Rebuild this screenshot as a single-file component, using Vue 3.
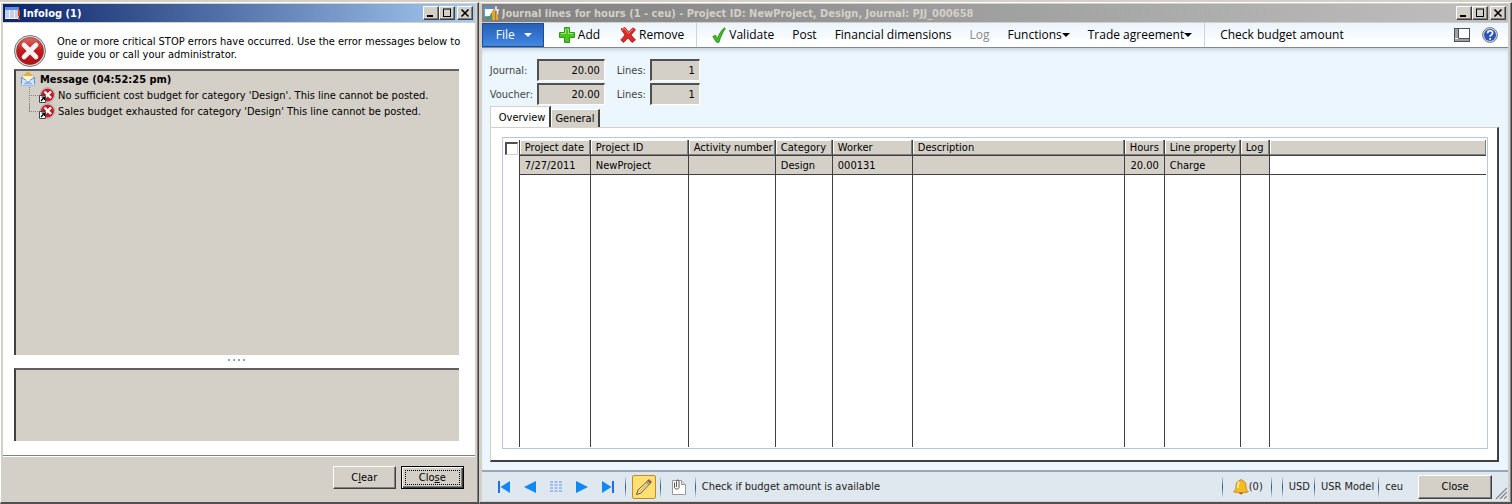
<template>
  <main class="desktop">
    <section class="window infolog">
      <header class="title-bar active">
        <svg class="title-icon" viewBox="0 0 16 16" width="16" height="16">
          <rect x="0" y="2" width="14" height="12" fill="#c3cfe6" />
          <rect x="0" y="2" width="14" height="3" fill="#5f8fdb" />
          <path d="M4.500 5v9M9.500 5v9M0 13.500h14" stroke="#f2f5fb" />
          <path d="M14 5v6M14 12.500v2.500" stroke="#e03c10" stroke-width="2" />
        </svg>
        <h1>Infolog (1)</h1>
        <div class="window-buttons">
          <button v-for="b in windowButtons" :key="b.name" :class="b.name" :aria-label="b.name">
            <svg viewBox="0 0 12 10" width="12" height="10"><path :d="b.path" fill="none" stroke="#000" :stroke-width="b.width" /></svg>
          </button>
        </div>
      </header>
      <div class="infolog-body">
        <div class="notice">
          <svg viewBox="0 0 32 32" width="32" height="32">
            <defs>
              <linearGradient id="stop" x1="0" y1="0" x2="0" y2="1">
                <stop offset="0" stop-color="#dc6a66" /><stop offset=".5" stop-color="#c01a1e" /><stop offset="1" stop-color="#b01216" />
              </linearGradient>
            </defs>
            <circle cx="16" cy="16" r="15.500" fill="#d9d9d9" stroke="#777" />
            <circle cx="16" cy="16" r="13.500" fill="url(#stop)" stroke="#8b1a1a" stroke-width=".6" />
            <path d="M10 10l12 12M22 10l-12 12" stroke="#f4f4f4" stroke-width="4.600" stroke-linecap="round" />
          </svg>
          <p>One or more critical STOP errors have occurred. Use the error messages below to guide you or call your administrator.</p>
        </div>
        <div class="sunken messages">
          <div class="message-head">
            <svg viewBox="0 0 16 16" width="16" height="16">
              <path d="M1 7l7-6 7 6z" fill="#f2ac2e" stroke="#d99a3a" stroke-width=".6" />
              <path d="M3 5h10v6H3z" fill="#fdf3cf" />
              <path d="M1.500 6.500l6.500 4 6.500-4v8h-13z" fill="#cfe2fa" stroke="#5b93d8" />
              <path d="M1.500 14l5-4.500h3l5 4.500z" fill="#8fb9ee" stroke="#fff" stroke-width=".8" />
            </svg>
            <strong>Message (04:52:25 pm)</strong>
          </div>
          <ul>
            <li v-for="m in messages" :key="m">
              <svg viewBox="0 0 16 16" width="16" height="16">
                <circle cx="8.500" cy="8" r="7.300" fill="#e4e4e4" stroke="#888" stroke-width=".6" />
                <circle cx="8.500" cy="8" r="6.500" fill="#c21d24" />
                <path d="M5.500 4.500l6.500 6.500M12 4.500l-6.500 6.500" stroke="#fff" stroke-width="2.400" />
                <path d="M.5 8.500h6v7h-6z" fill="#fff" stroke="#444" />
                <path d="M2.500 10h3v3M5.500 10l-3.500 4" fill="none" stroke="#000" stroke-width="1.200" />
              </svg>
              <span>{{ m }}</span>
            </li>
          </ul>
        </div>
        <div class="splitter"><i v-for="n in 4" :key="n"></i></div>
        <div class="sunken details"></div>
      </div>
      <footer class="infolog-footer">
        <button class="push">C<u>l</u>ear</button>
        <button class="push default">Clo<u>s</u>e</button>
      </footer>
    </section>

    <section class="window journal">
      <header class="title-bar">
        <svg class="title-icon" viewBox="0 0 16 16" width="16" height="16">
          <rect x=".5" y="2.500" width="10" height="9" fill="#fff" stroke="#5e9be0" />
          <path d="M1 3h9" stroke="#4d8de0" stroke-width="2" />
          <path d="M12 1v4h3M13.500 5v5" stroke="#eee" stroke-width="1.500" fill="none" />
          <path d="M3 13.500l3.500-1.500L8 8" stroke="#33a447" stroke-width="2" fill="none" />
          <path d="M7.500 7l2.500-4 1 3v9H8.500zM12 9h2v6h-2z" fill="#f4a51f" />
        </svg>
        <h1>Journal lines for hours (1 - ceu) - Project ID: NewProject, Design, Journal: PJJ_000658</h1>
        <div class="window-buttons">
          <button v-for="b in windowButtons" :key="b.name" :class="b.name" :aria-label="b.name">
            <svg viewBox="0 0 12 10" width="12" height="10"><path :d="b.path" fill="none" stroke="#000" :stroke-width="b.width" /></svg>
          </button>
        </div>
      </header>

      <nav class="toolbar">
        <button class="file">File<i class="caret"></i></button>
        <button class="tool first">
          <svg viewBox="0 0 16 16" width="16" height="16"><path d="M5.500 .5h5v5h5v5h-5v5h-5v-5h-5v-5h5z" fill="#4cc41f" stroke="#2c9a14" /><path d="M6.500 2v4.500H2M8 2h1.500v4.500H14" stroke="#a4e86a" fill="none" /></svg>
          Add
        </button>
        <button class="tool">
          <svg viewBox="0 0 16 16" width="16" height="16"><path d="M1 2l4-1.500L8.500 5 13 .8l2.500 2L11 8l4.500 5-3.500 2.500L8 11l-4.500 4.500L.8 13 5 8z" fill="#dc2a26" stroke="#a81818" stroke-width=".8" /><path d="M2 2.500l2.500-1L8.500 6.500 13 2" stroke="#f58a80" fill="none" /></svg>
          Remove
        </button>
        <span class="bar"></span>
        <button class="tool">
          <svg viewBox="0 0 14 16" width="14" height="16"><path d="M.8 9.500l2.700-1.300 2 3.300C7 7 9.500 3 12.500.8l.8 1C10.500 5.500 8.500 10 7 15.300H4.500z" fill="#42bb28" stroke="#238512" stroke-width=".8" /></svg>
          Validate
        </button>
        <button class="tool">Post</button>
        <button class="tool">Financial dimensions</button>
        <button class="tool" disabled>Log</button>
        <button class="tool menu">Functions<i class="caret"></i></button>
        <button class="tool menu">Trade agreement<i class="caret"></i></button>
        <span class="bar"></span>
        <button class="tool">Check budget amount</button>
        <div class="toolbar-end">
          <button aria-label="Layout">
            <svg viewBox="0 0 16 14" width="16" height="14">
              <rect x=".5" y=".5" width="15" height="13" fill="#fff" stroke="#4b5157" />
              <path d="M1 1h3v9H1zM1 11h14v2H1z" fill="#9ba1a8" /><path d="M4.500 1v9.500H15" fill="none" stroke="#4b5157" />
            </svg>
          </button>
          <button aria-label="Help">
            <svg viewBox="0 0 16 16" width="16" height="16">
              <circle cx="8" cy="8" r="7.400" fill="#d5d8de" stroke="#777c85" />
              <circle cx="8" cy="8" r="6" fill="#2b55b8" />
              <path d="M5.600 6.200c0-3.200 5-3.200 5-.2 0 2-2.500 1.800-2.500 3.800M8.100 11v1.800" stroke="#fff" stroke-width="1.700" fill="none" />
            </svg>
          </button>
        </div>
      </nav>

      <div class="journal-body">
        <div class="totals">
          <template v-for="t in totals" :key="t.id">
            <label :for="t.id">{{ t.label }}</label>
            <input :id="t.id" :value="t.amount" readonly />
            <label class="lines" :for="t.id + '-lines'">Lines:</label>
            <input :id="t.id + '-lines'" :value="t.lines" readonly />
          </template>
        </div>
        <div class="tabs" role="tablist">
          <button role="tab" aria-selected="true" class="tab selected">Overview</button>
          <button role="tab" aria-selected="false" class="tab">General</button>
        </div>
        <div class="panel">
          <div class="grid-frame">
            <table>
              <colgroup>
                <col class="c-mark"><col class="c-date"><col class="c-project"><col class="c-activity"><col class="c-category">
                <col class="c-worker"><col class="c-description"><col class="c-hours"><col class="c-property"><col class="c-log"><col>
              </colgroup>
              <thead>
                <tr>
                  <th class="mark"><input type="checkbox" aria-label="Mark all lines"></th>
                  <th v-for="c in columns" :key="c">{{ c }}</th>
                  <th></th>
                </tr>
              </thead>
              <tbody>
                <tr class="line">
                  <td class="mark"></td>
                  <td v-for="(v, i) in line" :key="i" :class="{ number: columns[i] === 'Hours' }">{{ v }}</td>
                  <td></td>
                </tr>
                <tr class="empty"><td class="mark"></td><td v-for="c in columns" :key="c"></td><td></td></tr>
              </tbody>
            </table>
          </div>
        </div>
      </div>

      <footer class="status-bar">
        <button class="nav" aria-label="First"><svg viewBox="0 0 14 14" width="14" height="14"><path d="M2 1v12" stroke="#1b6fe0" stroke-width="2" /><path d="M13 1v12L3.500 7z" fill="#1089f5" /></svg></button>
        <button class="nav" aria-label="Previous"><svg viewBox="0 0 14 14" width="14" height="14"><path d="M13 1v12L1 7z" fill="#1089f5" /></svg></button>
        <button class="nav" aria-label="Grid"><svg viewBox="0 0 14 14" width="14" height="14"><path d="M1 2h3M5.500 2h3M10 2h3M1 5h3M5.500 5h3M10 5h3M1 8h3M5.500 8h3M10 8h3M1 11h3M5.500 11h3M10 11h3" stroke="#9dbcf0" stroke-width="2" /></svg></button>
        <button class="nav" aria-label="Next"><svg viewBox="0 0 14 14" width="14" height="14"><path d="M1 1v12l12-6z" fill="#1089f5" /></svg></button>
        <button class="nav" aria-label="Last"><svg viewBox="0 0 14 14" width="14" height="14"><path d="M1 1v12l9.500-6z" fill="#1089f5" /><path d="M12 1v12" stroke="#1b6fe0" stroke-width="2" /></svg></button>
        <span class="divider"></span>
        <button class="edit" aria-label="Edit">
          <svg viewBox="0 0 18 18" width="18" height="18">
            <path d="M1.500 16.500l1.500-4.500L12.800 2.800l2.400 2.400L6 15z" fill="#fbe3a4" stroke="#5c4a1e" stroke-width=".9" />
            <path d="M12.800 2.800l1.200-1.300 2.500 2.500-1.300 1.200z" fill="#d94a52" stroke="#7c3030" stroke-width=".6" />
            <path d="M11.500 4L14 6.500" stroke="#5a9a78" stroke-width="1.500" /><path d="M4.500 13.500l8-8" stroke="#c79a3c" stroke-width=".8" />
          </svg>
        </button>
        <span class="divider"></span>
        <button class="attach" aria-label="Attachments">
          <svg viewBox="0 0 14 16" width="14" height="16">
            <path d="M.5 1.500h9l4 4v10H.5z" fill="#fff" stroke="#999" /><path d="M9.500 1.500v4h4" fill="#ddd" stroke="#999" />
            <path d="M2.500 3.500v5c0 2 4.500 2 4.500 0V2.500c0-2-2.500-2-2.500 0V8" fill="none" stroke="#555" />
          </svg>
        </button>
        <span class="divider"></span>
        <span class="hint">Check if budget amount is available</span>
        <span class="divider push-right"></span>
        <button class="alerts">
          <svg viewBox="0 0 16 16" width="16" height="16">
            <path d="M7 1.500C7 .3 9 .3 9 1.500c3 .6 4 3 4 6s.8 3.500 2.300 5c0 1.500-14.600 1.500-14.600 0C2.200 11 3 10.500 3 7.500s1-5.400 4-6z" fill="#f7bd1c" stroke="#b36a08" stroke-width=".7" />
            <path d="M6.300 3C5 4 4.800 6 4.800 9" stroke="#fff0a0" stroke-width="1.800" fill="none" />
            <path d="M6 13.800c.5 2 3.500 2 4 0z" fill="#b8560c" />
          </svg>(0)
        </button>
        <span class="divider"></span>
        <span class="divider"></span>
        <span>USD</span>
        <span class="divider"></span>
        <span>USR Model</span>
        <span class="divider"></span>
        <span>ceu</span>
        <button class="push close-form">Close</button>
        <svg class="grip" viewBox="0 0 12 12" width="12" height="12"><path d="M1 12L12 1M5 12l7-7M9 12l3-3" stroke="#808080" stroke-width="1.200" /></svg>
      </footer>
    </section>
  </main>
</template>

<script setup>
const windowButtons = [
  { name: 'minimize', path: 'M2 8h6', width: 2 },
  { name: 'maximize', path: 'M2 1h8M2.500 1v8M9.500 1v8M2 8.500h8', width: 1 },
  { name: 'close', path: 'M2.500 1.500l7 7M9.500 1.500l-7 7', width: 1.6 }
]

const messages = [
  "No sufficient cost budget for category 'Design'. This line cannot be posted.",
  "Sales budget exhausted for category 'Design' This line cannot be posted."
]

const totals = [
  { id: 'journal', label: 'Journal:', amount: '20.00', lines: '1' },
  { id: 'voucher', label: 'Voucher:', amount: '20.00', lines: '1' }
]

const columns = ['Project date', 'Project ID', 'Activity number', 'Category', 'Worker', 'Description', 'Hours', 'Line property', 'Log']
const line = ['7/27/2011', 'NewProject', '', 'Design', '000131', '', '20.00', 'Charge', '']
</script>

<style>
body { margin: 0; background: #d4d0c8; }
</style>

<style scoped>
* { box-sizing: border-box; }
.desktop { display: grid; grid-template-columns: 19fr 41fr; height: 100vh; min-height: 400px; font: 11px/13px Tahoma, "DejaVu Sans Condensed", sans-serif; color: #000; }
button, input { font: inherit; color: inherit; }
button { border: 0; background: none; padding: 0; white-space: nowrap; }
svg { display: block; flex: none; }

.window { display: flex; flex-direction: column; min-width: 0; background: #d4d0c8; border: 1px solid #fff; border-right-color: #404040; border-bottom: 2px solid #505050; box-shadow: inset -1px 0 #808080; margin-top: 2px; padding: 1px 3px 0 2px; }
.journal { border-left-color: #d4d0c8; }
.title-bar { display: flex; align-items: center; height: 18px; margin-bottom: 1px; padding-right: 2px; background: linear-gradient(90deg, #808080, #c0c0c0); color: #d4d0c8; }
.title-bar.active { background: linear-gradient(90deg, #0a246a, #a6caf0); color: #fff; }
.title-icon { margin: 0 2px; }
.title-bar h1 { flex: 1; margin: 0; font-size: 11px; font-weight: bold; white-space: nowrap; overflow: hidden; }
.window-buttons { display: flex; }
.window-buttons button { display: flex; align-items: center; justify-content: center; width: 16px; height: 14px; background: #d4d0c8; border: 1px solid #fff; border-right-color: #404040; border-bottom-color: #404040; box-shadow: inset -1px -1px #808080; }
.window-buttons .close { margin-left: 2px; }

.infolog-body { flex: 1; display: flex; flex-direction: column; min-height: 0; padding: 12px 16px 14px 11px; background: #fff; }
.notice { display: flex; gap: 11px; height: 34px; margin-right: -16px; }
.notice p { flex: 1; margin: 0; }
.sunken { background: #d4d0c8; border: solid #404040; border-width: 2px 0 0 2px; border-top-color: #606060; }
.messages { flex: 1; padding: 0 2px; }
.message-head { display: flex; align-items: center; gap: 4px; height: 16px; padding-left: 2px; }
.messages ul { margin: 0 0 0 11px; padding: 0; list-style: none; }
.messages li { display: flex; align-items: center; gap: 3px; height: 16px; white-space: nowrap; background: linear-gradient(90deg, #808080 50%, transparent 50%) 0 8px / 2px 1px repeat-x, linear-gradient(#808080 50%, transparent 50%) 0 0 / 1px 2px repeat-y; }
.messages li:last-child { background: linear-gradient(90deg, #808080 50%, transparent 50%) 0 8px / 2px 1px repeat-x, linear-gradient(#909090, #909090) 0 0 / 1px 8px no-repeat; }
.messages li svg { margin-left: 10px; }
.messages li span { flex: 1; margin-left: -3px; padding-left: 3px; background: #d4d0c8; }
.splitter { display: flex; justify-content: center; align-items: flex-start; gap: 3px; height: 13px; padding-top: 4px; }
.splitter i { width: 2px; height: 2px; background: #9aa4ae; }
.details { height: 73px; }
.infolog-footer { display: flex; justify-content: flex-end; gap: 5px; padding: 10px 11px 13px; border-top: 1px solid #808080; box-shadow: inset 0 1px #fff; }
.push { width: 63px; height: 23px; background: #d4d0c8; border: 1px solid #fff; border-right-color: #404040; border-bottom-color: #404040; box-shadow: inset -1px -1px #808080; }
.push.default { border-color: #000; outline: 1px dotted #000; outline-offset: -5px; box-shadow: inset 1px 1px #fff, inset -1px -1px #404040, inset -2px -2px #808080; }

.toolbar { display: flex; align-items: center; height: 25px; background: linear-gradient(#eaf4fd, #fff 80%); border-bottom: 1px solid #808890; font: 12px/16px "Segoe UI", "Open Sans", sans-serif; }
.file { display: flex; align-items: center; justify-content: space-between; align-self: stretch; width: 62px; padding: 0 11px 0 13px; background: linear-gradient(#2560b8, #4187e0); border: 1px solid #1d4c9c; color: #fff; }
.caret { border: solid transparent; border-top-color: currentColor; border-width: 4px 4px 0; }
.tool { display: flex; align-items: center; gap: 3px; margin-right: 18px; }
.tool.first { margin: 0 20px 0 15px; }
.tool:disabled { color: #8a8a8a; }
.menu { gap: 0; }
.bar { align-self: stretch; width: 1px; margin: 0 15px 0 -6px; background: #d0d4d8; }
.toolbar-end { display: flex; align-items: center; gap: 12px; margin: 0 10px 0 auto; }

.journal-body { flex: 1; display: flex; flex-direction: column; min-height: 0; padding: 11px 9px 8px 8px; background: #ebf6fe; border-bottom: 2px solid #9aa5b5; box-shadow: inset 0 4px 4px -2px #c6d0da; }
.totals { display: grid; grid-template-columns: 47px 68px 45px 50px; row-gap: 2px; align-items: center; margin-bottom: 1px; color: #444; }
.totals .lines { padding-left: 12px; }
.totals input { min-width: 0; width: 100%; height: 22px; padding: 0 4px; text-align: right; color: #000; background: #d4d0c8; border: 2px solid #404040; border-color: #505050 #fff #fff #505050; border-right-width: 1px; border-bottom-width: 1px; border-radius: 0; }
.tabs { display: flex; align-items: flex-end; height: 21px; }
.tab { height: 18px; padding: 0 4px 0 3px; background: #d4d0c8; border: solid #fff; border-width: 1px 2px 0 1px; border-right-color: #404040; }
.tab.selected { height: 21px; padding: 0 4px 0 8px; background: #fff; border-left-color: #d4d0c8; border-top-color: #d4d0c8; }
.panel { flex: 1; display: flex; min-height: 0; padding: 9px 9px 11px 11px; background: #fff; border: 1px solid #d4d0c8; border-right: 2px solid #404040; border-bottom: 2px solid #404040; }
.grid-frame { flex: 1; display: grid; min-width: 0; padding: 2px 1px 1px; border: 1px solid #b9c7da; }
table { width: 100%; height: 100%; table-layout: fixed; border-collapse: separate; border-spacing: 0; white-space: nowrap; }
th, td { padding: 0 5px; overflow: hidden; text-align: left; font-weight: normal; border-right: 1px solid #404040; }
th:last-child, td:last-child { border-right: 0; }
th { height: 16px; background: #d4d0c8; border-bottom: 1px solid #404040; box-shadow: inset -1px -1px #808080, inset 1px 1px #fff; }
.line td { height: 19px; background: #d4d0c8; border-bottom: 1px solid #404040; }
.line td:last-child { background: #fff; }
.line .mark, th.mark { padding: 0; background: #fff; border-bottom: 0; box-shadow: none; }
.line .number { text-align: right; }
.mark input { display: block; appearance: none; width: 13px; height: 13px; margin: 0 0 0 1px; background: #fff; border: 2px solid #505050; border-right: 1px solid #d4d0c8; border-bottom: 1px solid #d4d0c8; }
.c-mark { width: 16px; }
.c-date { width: 71px; }
.c-project { width: 98px; }
.c-activity { width: 87px; }
.c-category { width: 57px; }
.c-worker { width: 80px; }
.c-description { width: 212px; }
.c-hours { width: 40px; }
.c-property { width: 76px; }
.c-log { width: 29px; }

.status-bar { display: flex; align-items: center; height: 29px; margin-bottom: 1px; padding-left: 9px; background: #dfe7ef; color: #222; white-space: nowrap; }
.nav { display: flex; justify-content: center; width: 26px; }
.divider { width: 1px; height: 22px; margin: 0 6px 0 4px; background: linear-gradient(#dfe7ef, #2c5580, #dfe7ef); }
.push-right { margin-left: auto; }
.edit { display: grid; place-items: center; width: 24px; height: 24px; background: #fedf74; border: 1px solid #c28a30; border-radius: 2px; }
.attach { margin: 0 5px; }
.alerts { display: flex; align-items: center; padding: 0 4px; }
.push.close-form { width: 74px; height: 24px; margin-left: 15px; color: #000; }
.grip { align-self: flex-end; margin: 0 1px 2px 3px; }
</style>
